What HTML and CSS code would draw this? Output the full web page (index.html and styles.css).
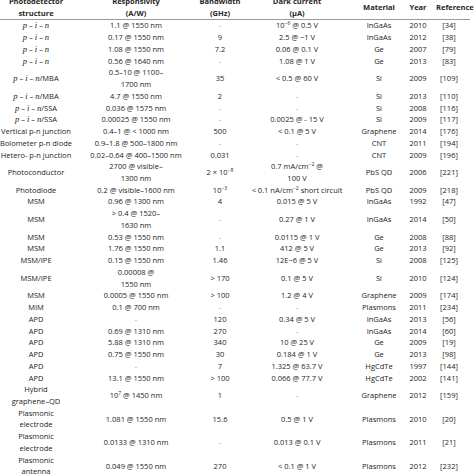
FILE: index.html
```html
<!DOCTYPE html>
<html>
<head>
<meta charset="utf-8">
<link rel="stylesheet" href="styles.css">
</head>
<body>
<table class="tbl">
<colgroup>
<col class="c1"><col class="c2"><col class="c3"><col class="c4"><col class="c5"><col class="c6"><col class="c7">
</colgroup>
<thead>
<tr><th>Photodetector<br>structure</th><th>Responsivity<br>(A/W)</th><th>Bandwidth<br>(GHz)</th><th>Dark current<br>(µA)</th><th>Material</th><th>Year</th><th class="ref">Reference</th></tr>
</thead>
<tbody>
<tr><td><i class="m">p</i> – <i class="m">i</i> – <i class="m">n</i></td><td>1.1 @ 1550 nm</td><td><span class="d">-</span></td><td>10<sup>−6</sup> @ 0.5 V</td><td>InGaAs</td><td>2010</td><td>[34]</td></tr>
<tr><td><i class="m">p</i> – <i class="m">i</i> – <i class="m">n</i></td><td>0.17 @ 1550 nm</td><td>9</td><td>2.5 @ −1 V</td><td>InGaAs</td><td>2012</td><td>[38]</td></tr>
<tr><td><i class="m">p</i> – <i class="m">i</i> – <i class="m">n</i></td><td>1.08 @ 1550 nm</td><td>7.2</td><td>0.06 @ 0.1 V</td><td>Ge</td><td>2007</td><td>[79]</td></tr>
<tr><td><i class="m">p</i> – <i class="m">i</i> – <i class="m">n</i></td><td>0.56 @ 1640 nm</td><td><span class="d">-</span></td><td>1.08 @ 1 V</td><td>Ge</td><td>2013</td><td>[83]</td></tr>
<tr><td><i class="m">p</i> – <i class="m">i</i> – <i class="m">n</i>/MBA</td><td>0.5–10 @ 1100–<br>1700 nm</td><td>35</td><td>&lt; 0.5 @ 60 V</td><td>Si</td><td>2009</td><td>[109]</td></tr>
<tr><td><i class="m">p</i> – <i class="m">i</i> – <i class="m">n</i>/MBA</td><td>4.7 @ 1550 nm</td><td>2</td><td><span class="d">-</span></td><td>Si</td><td>2013</td><td>[110]</td></tr>
<tr><td><i class="m">p</i> – <i class="m">i</i> – <i class="m">n</i>/SSA</td><td>0.036 @ 1575 nm</td><td><span class="d">-</span></td><td><span class="d">-</span></td><td>Si</td><td>2008</td><td>[116]</td></tr>
<tr><td><i class="m">p</i> – <i class="m">i</i> – <i class="m">n</i>/SSA</td><td>0.00025 @ 1550 nm</td><td><span class="d">-</span></td><td>0.0025 @ - 15 V</td><td>Si</td><td>2009</td><td>[117]</td></tr>
<tr><td>Vertical p-n junction</td><td>0.4–1 @ &lt; 1000 nm</td><td>500</td><td>&lt; 0.1 @ 5 V</td><td>Graphene</td><td>2014</td><td>[176]</td></tr>
<tr><td>Bolometer p-n diode</td><td>0.9–1.8 @ 500–1800 nm</td><td><span class="d">-</span></td><td><span class="d">-</span></td><td>CNT</td><td>2011</td><td>[194]</td></tr>
<tr><td>Hetero- p-n junction</td><td>0.02–0.64 @ 400–1500 nm</td><td>0.031</td><td><span class="d">-</span></td><td>CNT</td><td>2009</td><td>[196]</td></tr>
<tr><td>Photoconductor</td><td>2700 @ visible–<br>1300 nm</td><td>2 × 10<sup>−8</sup></td><td>0.7 mA/cm<sup>−2</sup> @<br>100 V</td><td>PbS QD</td><td>2006</td><td>[221]</td></tr>
<tr><td>Photodiode</td><td>0.2 @ visible–1600 nm</td><td>10<sup>−3</sup></td><td>&lt; 0.1 nA/cm<sup>−2</sup> short circuit</td><td>PbS QD</td><td>2009</td><td>[218]</td></tr>
<tr><td>MSM</td><td>0.96 @ 1300 nm</td><td>4</td><td>0.015 @ 5 V</td><td>InGaAs</td><td>1992</td><td>[47]</td></tr>
<tr><td>MSM</td><td>&gt; 0.4 @ 1520–<br>1630 nm</td><td><span class="d">-</span></td><td>0.27 @ 1 V</td><td>InGaAs</td><td>2014</td><td>[50]</td></tr>
<tr><td>MSM</td><td>0.53 @ 1550 nm</td><td><span class="d">-</span></td><td>0.0115 @ 1 V</td><td>Ge</td><td>2008</td><td>[88]</td></tr>
<tr><td>MSM</td><td>1.76 @ 1550 nm</td><td>1.1</td><td>412 @ 5 V</td><td>Ge</td><td>2013</td><td>[92]</td></tr>
<tr><td>MSM/IPE</td><td>0.15 @ 1550 nm</td><td>1.46</td><td>12E−6 @ 5 V</td><td>Si</td><td>2008</td><td>[125]</td></tr>
<tr><td>MSM/IPE</td><td>0.00008 @<br>1550 nm</td><td>&gt; 170</td><td>0.1 @ 5 V</td><td>Si</td><td>2010</td><td>[124]</td></tr>
<tr><td>MSM</td><td>0.0005 @ 1550 nm</td><td>&gt; 100</td><td>1.2 @ 4 V</td><td>Graphene</td><td>2009</td><td>[174]</td></tr>
<tr><td>MIM</td><td>0.1 @ 700 nm</td><td><span class="d">-</span></td><td><span class="d">-</span></td><td>Plasmons</td><td>2011</td><td>[234]</td></tr>
<tr><td>APD</td><td><span class="d">-</span></td><td>120</td><td>0.34 @ 5 V</td><td>InGaAs</td><td>2013</td><td>[56]</td></tr>
<tr><td>APD</td><td>0.69 @ 1310 nm</td><td>270</td><td><span class="d">-</span></td><td>InGaAs</td><td>2014</td><td>[60]</td></tr>
<tr><td>APD</td><td>5.88 @ 1310 nm</td><td>340</td><td>10 @ 25 V</td><td>Ge</td><td>2009</td><td>[19]</td></tr>
<tr><td>APD</td><td>0.75 @ 1550 nm</td><td>30</td><td>0.184 @ 1 V</td><td>Ge</td><td>2013</td><td>[98]</td></tr>
<tr><td>APD</td><td><span class="d">-</span></td><td>7</td><td>1.325 @ 63.7 V</td><td>HgCdTe</td><td>1997</td><td>[144]</td></tr>
<tr><td>APD</td><td>13.1 @ 1550 nm</td><td>&gt; 100</td><td>0.066 @ 77.7 V</td><td>HgCdTe</td><td>2002</td><td>[141]</td></tr>
<tr><td>Hybrid<br>graphene–QD</td><td>10<sup>7</sup> @ 1450 nm</td><td>1</td><td><span class="d">-</span></td><td>Graphene</td><td>2012</td><td>[159]</td></tr>
<tr><td>Plasmonic<br>electrode</td><td>1.081 @ 1550 nm</td><td>15.6</td><td>0.5 @ 1 V</td><td>Plasmons</td><td>2010</td><td>[20]</td></tr>
<tr><td>Plasmonic<br>electrode</td><td>0.0133 @ 1310 nm</td><td><span class="d">-</span></td><td>0.013 @ 0.1 V</td><td>Plasmons</td><td>2011</td><td>[21]</td></tr>
<tr><td>Plasmonic<br>antenna</td><td>0.049 @ 1550 nm</td><td>270</td><td>&lt; 0.1 @ 1 V</td><td>Plasmons</td><td>2012</td><td>[232]</td></tr>
</tbody>
</table>
</body>
</html>
```

FILE: styles.css
```css
html, body {
  margin: 0;
  padding: 0;
  background: #fff;
  overflow: hidden;
}
.tbl {
  margin: -4px 0 0 -4px;
  border-collapse: collapse;
  table-layout: fixed;
  width: 474px;
  font-family: "Open Sans", "DejaVu Sans", sans-serif;
  font-size: 7.5px;
  line-height: 11.74px;
  color: #1c1c1c;
}
.c1 { width: 80px; }
.c2 { width: 120px; }
.c3 { width: 48px; }
.c4 { width: 106px; }
.c5 { width: 58px; }
.c6 { width: 20px; }
.c7 { width: 42px; }
.tbl th, .tbl td {
  padding: 0;
  text-align: center;
  vertical-align: middle;
  white-space: nowrap;
}
.tbl th {
  font-weight: 700;
  color: #262626;
  border-bottom: 1px solid #9a9a9a;
}
.tbl th.ref {
  text-align: left;
  padding-left: 8px;
}
.tbl sup {
  font-size: 5px;
  line-height: 0;
  vertical-align: 3px;
}
.m {
  font-family: "Liberation Serif", "DejaVu Serif", serif;
  font-size: 8.6px;
}
.d {
  color: #999;
}
```
